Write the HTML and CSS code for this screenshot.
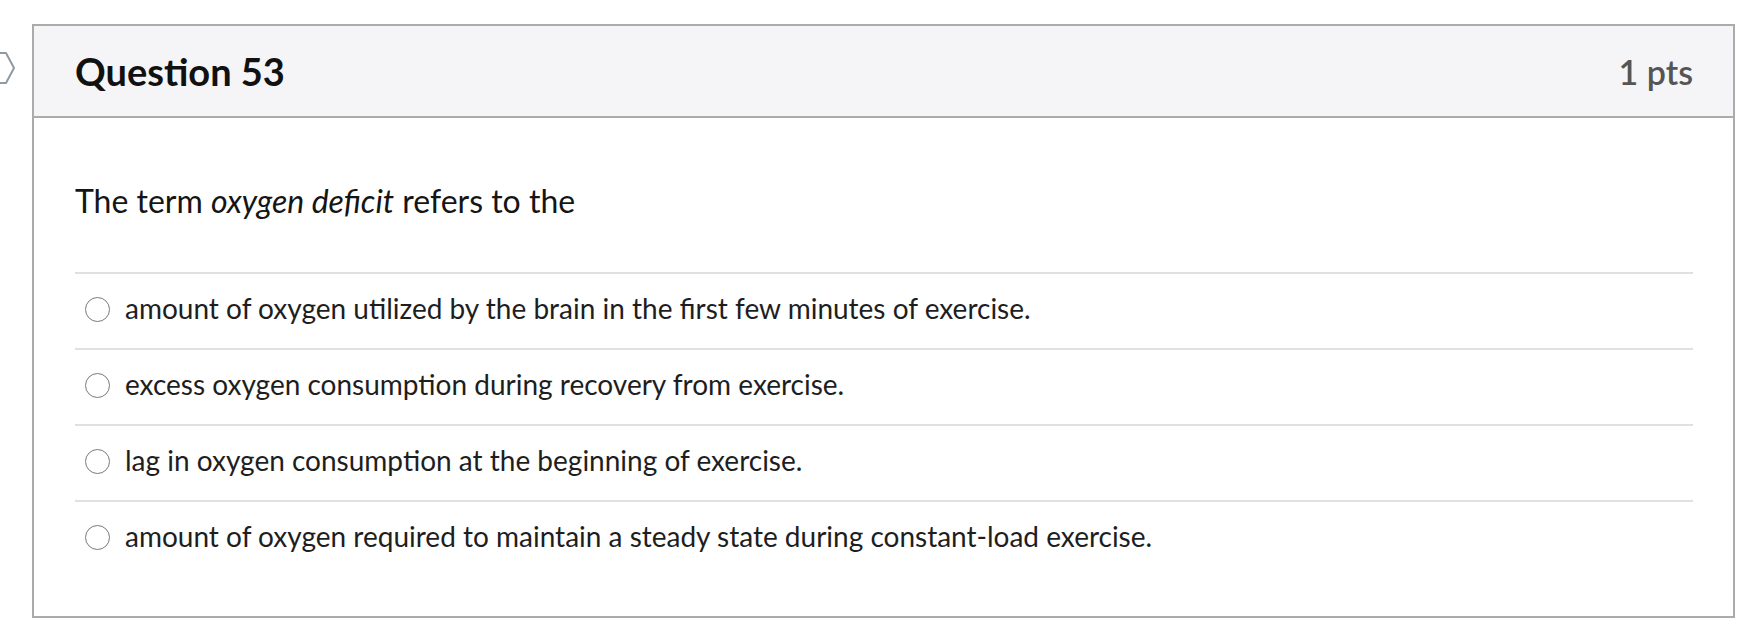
FILE: index.html
```html
<!DOCTYPE html>
<html lang="en">
<head>
<meta charset="utf-8">
<title>Question 53</title>
<link rel="stylesheet" href="styles.css">
</head>
<body>
<div class="page">
  <div class="flag">
    <svg class="flag-icon" width="16" height="32" viewBox="0 0 16 32" aria-hidden="true">
      <polyline points="-6,1 6,1 14,16 6,31 -6,31" fill="none" stroke="#8f9aa3" stroke-width="2" stroke-linejoin="round"/>
    </svg>
  </div>
  <div class="card">
    <div class="card-header">
      <h2 class="q-title">Question 53</h2>
      <span class="q-points">1 pts</span>
    </div>
    <div class="card-body">
      <p class="q-text">The term <em>oxygen deficit</em> refers to the</p>
      <ul class="answers">
        <li class="answer"><span class="radio"></span><span class="answer-label">amount of oxygen utilized by the brain in the first few minutes of exercise.</span></li>
        <li class="answer"><span class="radio"></span><span class="answer-label">excess oxygen consumption during recovery from exercise.</span></li>
        <li class="answer"><span class="radio"></span><span class="answer-label">lag in oxygen consumption at the beginning of exercise.</span></li>
        <li class="answer"><span class="radio"></span><span class="answer-label">amount of oxygen required to maintain a steady state during constant-load exercise.</span></li>
      </ul>
    </div>
  </div>
</div>
</body>
</html>
```

FILE: styles.css
```css
* { box-sizing: border-box; }
html, body { margin: 0; padding: 0; background: #ffffff; }
body {
  font-family: Lato, "Open Sans", "Liberation Sans", sans-serif;
  color: #1b1b1b;
}
.page {
  display: flex;
  align-items: flex-start;
  padding-top: 24px;
}
.flag {
  width: 32px;
  flex: none;
  padding-top: 28px;
}
.flag-icon { display: block; }
.card {
  width: 1703px;
  flex: none;
  border: 2px solid #ababab;
  background: #fff;
}
.card-header {
  display: flex;
  align-items: center;
  justify-content: space-between;
  height: 92px;
  padding: 0 40px 0 41px;
  background: #f5f5f7;
  border-bottom: 2px solid #ababab;
}
.q-title {
  margin: 0;
  font-size: 38px;
  font-weight: 700;
  color: #111;
  letter-spacing: 0;
}
.q-points {
  font-size: 34px;
  font-weight: 600;
  color: #555;
}
.card-body {
  padding: 62px 40px 40px 41px;
}
.q-text {
  margin: 0 0 51px;
  font-size: 32px;
  line-height: 41px;
  color: #151515;
}
.q-text em { font-style: italic; }
.answers {
  list-style: none;
  margin: 0;
  padding: 0;
}
.answer {
  display: flex;
  align-items: center;
  height: 76px;
  border-top: 2px solid #e0e0e0;
  padding-left: 10px;
  padding-bottom: 6px;
  font-size: 28px;
  color: #1e1e1e;
}
.radio {
  width: 25px;
  height: 25px;
  border-radius: 50%;
  border: 1.5px solid #7a7a7a;
  flex: none;
  margin-right: 15px;
  margin-top: 3px;
  background: #fff;
}
```
